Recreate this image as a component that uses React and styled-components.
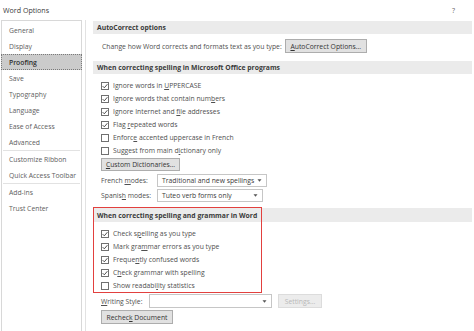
import React from "react";
import styled, { createGlobalStyle } from "styled-components";

const Global = createGlobalStyle`
  html, body { margin: 0; padding: 0; background: #fff; }
  * { box-sizing: border-box; }
`;

const Window = styled.div`
  width: 474px;
  height: 331px;
  overflow: hidden;
  background: #fff;
  font-family: "Open Sans", "Noto Sans", sans-serif;
  font-size: 6.8px;
  color: #505050;
  display: flex;
  flex-direction: column;
`;

const TitleBar = styled.div`
  height: 20px;
  flex: none;
  display: flex;
  align-items: center;
  justify-content: space-between;
  padding: 0 19px 0 3px;
  font-size: 7.1px;
  color: #3a3a3a;
`;

const Help = styled.span`
  font-size: 7px;
  color: #666;
`;

const Body = styled.div`
  flex: 1;
  display: flex;
  gap: 3px;
  padding-left: 1px;
  min-height: 0;
`;

const Sidebar = styled.nav`
  width: 81px;
  flex: none;
  border: 1px solid #d8d8d8;
  border-bottom: none;
  padding-top: 1px;
  display: flex;
  flex-direction: column;
`;

const NavItem = styled.div`
  height: 16px;
  display: flex;
  align-items: center;
  padding-left: 7px;
  color: ${(p) => (p.$active ? "#2e2e2e" : "#5e5e5e")};
  font-weight: ${(p) => (p.$active ? 600 : 400)};
  background: ${(p) => (p.$active ? "#cbcbcb" : "transparent")};
  border: 1px ${(p) => (p.$active ? "dotted #7a7a7a" : "solid transparent")};
  margin: 0 -1px;
  white-space: nowrap;
`;

const NavSep = styled.div`
  height: 1px;
  background: #e2e2e2;
  margin: 0 1px;
`;

const Content = styled.main`
  flex: 1;
  border-left: 1px solid #e2e2e2;
  padding: 1px 2px 0 7px;
  display: flex;
  flex-direction: column;
  min-width: 0;
`;

const SectionHeader = styled.div`
  height: ${(p) => p.$h || 13}px;
  flex: none;
  margin-top: ${(p) => p.$mt || 0}px;
  background: #ebebeb;
  display: flex;
  align-items: center;
  padding-left: 4px;
  font-weight: 700;
  color: #3a3a3a;
  white-space: nowrap;
`;

const DescRow = styled.div`
  margin-top: 5px;
  height: 14px;
  display: flex;
  align-items: center;
  gap: 3px;
  padding-left: 9px;
  white-space: nowrap;
`;

const Button = styled.div`
  height: ${(p) => p.$h || 14}px;
  width: ${(p) => p.$w}px;
  flex: none;
  margin-top: ${(p) => p.$mt || 0}px;
  margin-left: ${(p) => p.$ml || 0}px;
  display: flex;
  align-items: center;
  justify-content: center;
  border: 1px solid ${(p) => (p.$disabled ? "#dcdcdc" : "#adadad")};
  background: ${(p) => (p.$disabled ? "#ececec" : "#e1e1e1")};
  color: ${(p) => (p.$disabled ? "#b8b8b8" : "#333")};
  white-space: nowrap;
`;

const CheckList = styled.div`
  margin-top: 5px;
  padding-left: 8px;
  display: flex;
  flex-direction: column;
`;

const CheckRow = styled.div`
  height: 13px;
  display: flex;
  align-items: center;
  gap: 4px;
  white-space: nowrap;
`;

const Box = styled.span`
  width: 8px;
  height: 8px;
  flex: none;
  border: 1px solid #707070;
  background: #fff;
  display: flex;
  align-items: center;
  justify-content: center;
`;

const FieldRow = styled.div`
  margin-top: ${(p) => p.$mt || 0}px;
  height: 14px;
  padding-left: 8px;
  display: flex;
  align-items: center;
  white-space: nowrap;
`;

const FieldLabel = styled.span`
  width: ${(p) => p.$w}px;
  flex: none;
`;

const Select = styled.div`
  width: ${(p) => p.$w}px;
  height: ${(p) => p.$h || 13}px;
  flex: none;
  margin-right: ${(p) => p.$mr || 0}px;
  border: 1px solid #c6c6c6;
  background: #fff;
  display: flex;
  align-items: center;
  justify-content: space-between;
  padding: 0 4px 0 4px;
  color: #3a3a3a;
`;

const Highlighted = styled.div`
  position: relative;
  margin-top: 5px;
  padding: 1px 0;
  display: flex;
  flex-direction: column;
`;

const RedFrame = styled.div`
  position: absolute;
  left: 0;
  top: 0;
  bottom: 0;
  width: 169px;
  border: 1.5px solid #e2403e;
  pointer-events: none;
`;

const U = styled.span`
  text-decoration: underline;
  text-underline-offset: 1px;
  text-decoration-thickness: 0.6px;
`;

const Check = () => (
  <svg width="6" height="6" viewBox="0 0 6 6">
    <path d="M0.6 3.1 L2.3 4.8 L5.4 1.2" fill="none" stroke="#3c3c3c" strokeWidth="0.9" />
  </svg>
);

const Arrow = () => (
  <svg width="5" height="3" viewBox="0 0 5 3">
    <path d="M0.5 0.3 L4.5 0.3 L2.5 2.7 Z" fill="#555" />
  </svg>
);

const CheckItem = ({ checked, children }) => (
  <CheckRow>
    <Box>{checked && <Check />}</Box>
    <span>{children}</span>
  </CheckRow>
);

export default function App() {
  return (
    <>
      <Global />
      <Window>
        <TitleBar>
          <span>Word Options</span>
          <Help>?</Help>
        </TitleBar>
        <Body>
          <Sidebar>
            <NavItem>General</NavItem>
            <NavItem>Display</NavItem>
            <NavItem $active>Proofing</NavItem>
            <NavItem>Save</NavItem>
            <NavItem>Typography</NavItem>
            <NavItem>Language</NavItem>
            <NavItem>Ease of Access</NavItem>
            <NavItem>Advanced</NavItem>
            <NavSep />
            <NavItem>Customize Ribbon</NavItem>
            <NavItem>Quick Access Toolbar</NavItem>
            <NavSep />
            <NavItem>Add-ins</NavItem>
            <NavItem>Trust Center</NavItem>
          </Sidebar>
          <Content>
            <SectionHeader>AutoCorrect options</SectionHeader>
            <DescRow>
              <span>Change how Word corrects and formats text as you type:</span>
              <Button $w={82}>
                <span>
                  <U>A</U>utoCorrect Options...
                </span>
              </Button>
            </DescRow>
            <SectionHeader $mt={8}>When correcting spelling in Microsoft Office programs</SectionHeader>
            <CheckList>
              <CheckItem checked>
                Ignore words in <U>U</U>PPERCASE
              </CheckItem>
              <CheckItem checked>
                Ignore words that contain num<U>b</U>ers
              </CheckItem>
              <CheckItem checked>
                Ignore Internet and <U>f</U>ile addresses
              </CheckItem>
              <CheckItem checked>
                Flag <U>r</U>epeated words
              </CheckItem>
              <CheckItem>
                Enforc<U>e</U> accented uppercase in French
              </CheckItem>
              <CheckItem>
                Suggest from main d<U>i</U>ctionary only
              </CheckItem>
            </CheckList>
            <Button $w={79} $h={13} $mt={1} $ml={8}>
              <span>
                <U>C</U>ustom Dictionaries...
              </span>
            </Button>
            <FieldRow $mt={2}>
              <FieldLabel $w={56}>
                French <U>m</U>odes:
              </FieldLabel>
              <Select $w={110}>
                <span>Traditional and new spellings</span>
                <Arrow />
              </Select>
            </FieldRow>
            <FieldRow $mt={1}>
              <FieldLabel $w={56}>
                Spanis<U>h</U> modes:
              </FieldLabel>
              <Select $w={106}>
                <span>Tuteo verb forms only</span>
                <Arrow />
              </Select>
            </FieldRow>
            <Highlighted>
              <SectionHeader $h={14}>When correcting spelling and grammar in Word</SectionHeader>
              <CheckList>
                <CheckItem checked>
                  Check s<U>p</U>elling as you type
                </CheckItem>
                <CheckItem checked>
                  Mark gra<U>m</U>mar errors as you type
                </CheckItem>
                <CheckItem checked>
                  Freque<U>n</U>tly confused words
                </CheckItem>
                <CheckItem checked>
                  C<U>h</U>eck grammar with spelling
                </CheckItem>
                <CheckItem>
                  Show readabi<U>l</U>ity statistics
                </CheckItem>
              </CheckList>
              <RedFrame />
            </Highlighted>
            <FieldRow $mt={1}>
              <FieldLabel $w={48}>
                <U>W</U>riting Style:
              </FieldLabel>
              <Select $w={123} $h={14} $mr={6}>
                <span />
                <Arrow />
              </Select>
              <Button $w={44} $disabled>
                Settings...
              </Button>
            </FieldRow>
            <Button $w={72} $mt={2} $ml={8}>
              <span>
                Rechec<U>k</U> Document
              </span>
            </Button>
          </Content>
        </Body>
      </Window>
    </>
  );
}
